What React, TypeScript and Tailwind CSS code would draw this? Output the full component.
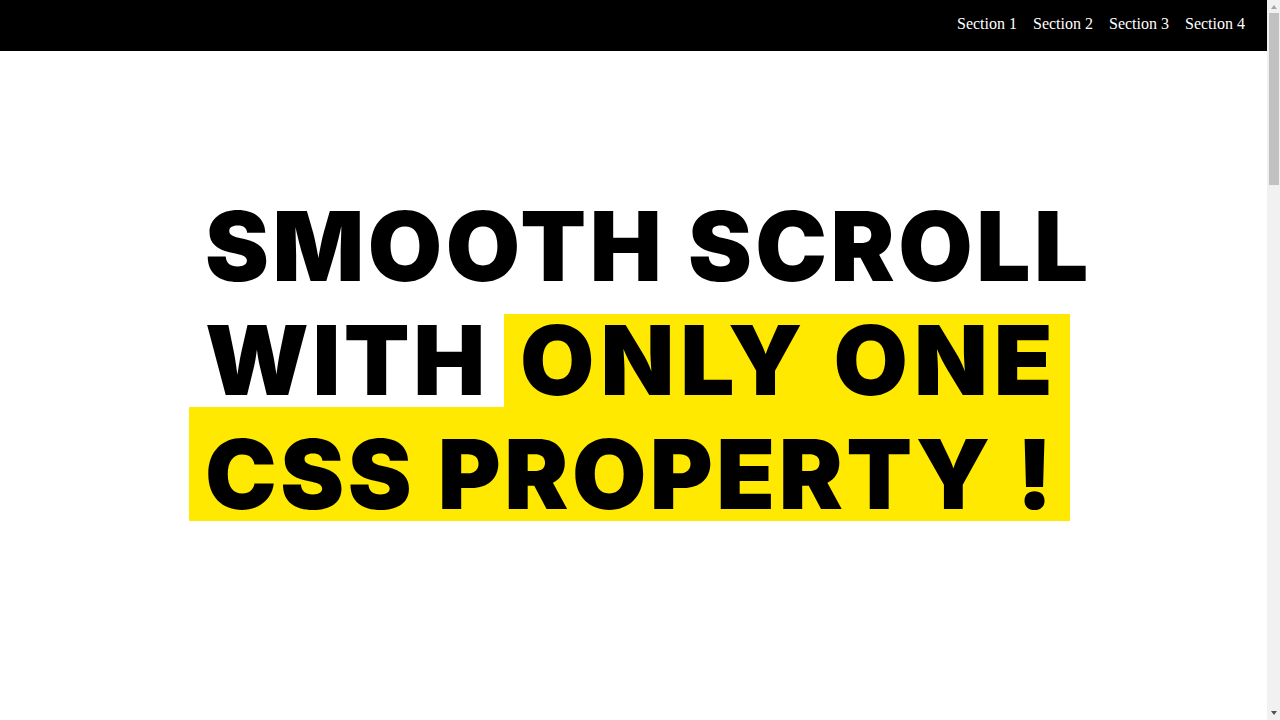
export default function App() {
  const links = ["Section 1", "Section 2", "Section 3", "Section 4"];
  return (
    <div className="bg-white">
      {/* fixed top bar */}
      <nav className="fixed left-0 right-[13px] top-0 z-10 flex h-[51px] items-center justify-end gap-4 bg-black pr-[22px] pb-[3px] font-['Liberation_Serif',serif] text-base text-white">
        {links.map((l) => (
          <a key={l} href={"#" + l.replace(" ", "")}>
            {l}
          </a>
        ))}
      </nav>

      {/* browser scrollbar as seen in the capture */}
      <div className="fixed right-0 top-0 z-20 flex h-screen w-[13px] flex-col items-center bg-[#f1f1f1] py-[5px]">
        <div className="h-0 w-0 border-x-[3.5px] border-b-[4px] border-x-transparent border-b-[#a3a3a3]" />
        <div className="mt-[4px] ml-[1px] h-[172px] w-[10px] bg-[#c1c1c1]" />
        <div className="flex-1" />
        <div className="h-0 w-0 border-x-[3.5px] border-t-[4px] border-x-transparent border-t-[#505050]" />
      </div>

      <section id="Section1" className="h-screen pt-[200px]">
        <h1 className="ml-[189px] font-['Inter',sans-serif] text-[96px] font-black leading-[93px] tracking-[3.5px] text-black">
          <div className="mb-[21px] pl-[16px]">SMOOTH SCROLL</div>
          <div className="flex">
            <span className="w-[315px] pl-[16px]">WITH</span>
            <span className="w-[566px] bg-[#ffe900] pl-[16px] tracking-[6px]">ONLY ONE</span>
          </div>
          <div className="w-[881px] bg-[#ffe900] pt-[21px] pl-[16px]">CSS PROPERTY !</div>
        </h1>
      </section>
      <section id="Section2" className="h-screen" />
      <section id="Section3" className="h-screen" />
      <section id="Section4" className="h-screen" />
    </div>
  );
}
